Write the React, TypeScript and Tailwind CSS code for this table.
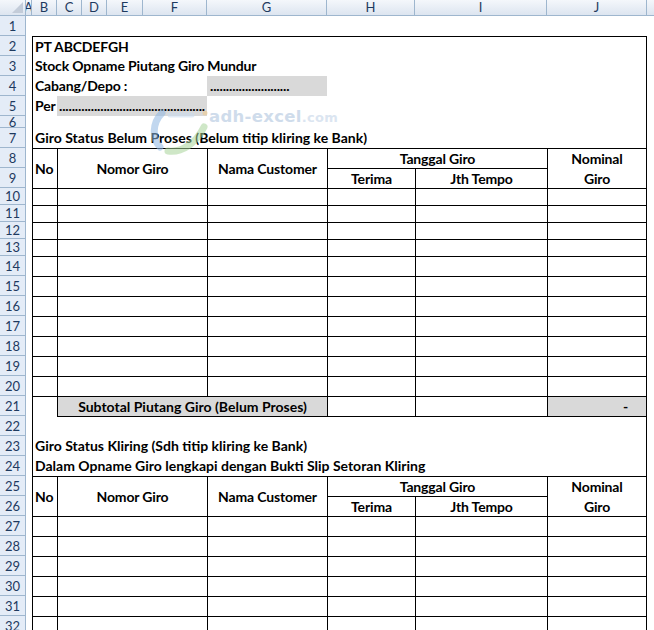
import React from "react";

// Excel-style sheet: Stock Opname Piutang Giro Mundur

const NUM =
  "flex w-[26px] shrink-0 items-center justify-center overflow-hidden border-r border-b border-[#9eb6ce] bg-[#e4ecf7] text-[13px] font-normal tracking-normal text-[#1e3a5f]";
const LINE = "border-black";
const GRAY = "bg-[#d9d9d9]";

function Num({ n }: { n: number }) {
  return <div className={NUM}>{n}</div>;
}

function Row({
  n,
  h = "h-[20px]",
  children,
}: {
  n: number;
  h?: string;
  children?: React.ReactNode;
}) {
  return (
    <div className={`flex ${h}`}>
      <Num n={n} />
      <div className="w-[6px] shrink-0" />
      {children}
    </div>
  );
}

// row inside the outer frame, text starting in column B
function FrameRow({
  n,
  top,
  children,
}: {
  n: number;
  top?: boolean;
  children?: React.ReactNode;
}) {
  return (
    <Row n={n} h={n === 6 ? "h-[12px]" : "h-[20px]"}>
      <div
        className={`flex w-[615px] shrink-0 whitespace-nowrap border-l border-r ${LINE} ${
          top ? "border-t" : ""
        }`}
      >
        {children}
      </div>
    </Row>
  );
}

function DataRow({ n, h = "h-[20px]" }: { n: number; h?: string }) {
  return (
    <Row n={n} h={h}>
      <div className={`w-[25px] shrink-0 border-l border-t ${LINE}`} />
      <div className={`w-[150px] shrink-0 border-l border-t ${LINE}`} />
      <div className={`w-[120px] shrink-0 border-l border-t ${LINE}`} />
      <div className={`w-[88px] shrink-0 border-l border-t ${LINE}`} />
      <div className={`w-[132px] shrink-0 border-l border-t ${LINE}`} />
      <div className={`w-[100px] shrink-0 border-l border-t border-r ${LINE}`} />
    </Row>
  );
}

function HeadBlock({ a }: { a: number }) {
  return (
    <div className="flex h-[40px]">
      <div className="flex w-[26px] shrink-0 flex-col">
        <div className={`${NUM} h-[20px]`}>{a}</div>
        <div className={`${NUM} h-[20px]`}>{a + 1}</div>
      </div>
      <div className="w-[6px] shrink-0" />
      <div className="grid shrink-0 grid-cols-[25px_150px_120px_88px_132px_100px] grid-rows-[20px_20px] text-center">
        <div className={`row-span-2 flex items-center border-l border-t pl-[2px] text-left ${LINE}`}>
          No
        </div>
        <div className={`row-span-2 flex items-center justify-center border-l border-t ${LINE}`}>
          Nomor Giro
        </div>
        <div className={`row-span-2 flex items-center justify-center border-l border-t ${LINE}`}>
          Nama Customer
        </div>
        <div className={`col-span-2 border-l border-t ${LINE}`}>Tanggal Giro</div>
        <div className={`row-span-2 flex flex-col border-l border-t border-r ${LINE}`}>
          <span>Nominal</span>
          <span>Giro</span>
        </div>
        <div className={`col-start-4 row-start-2 border-l border-t ${LINE}`}>Terima</div>
        <div className={`col-start-5 row-start-2 border-l border-t ${LINE}`}>Jth Tempo</div>
      </div>
    </div>
  );
}

const COLS: [string, string][] = [
  ["A", "w-[6px]"],
  ["B", "w-[25px]"],
  ["C", "w-[25px]"],
  ["D", "w-[25px]"],
  ["E", "w-[36px]"],
  ["F", "w-[64px]"],
  ["G", "w-[120px]"],
  ["H", "w-[88px]"],
  ["I", "w-[132px]"],
  ["J", "w-[100px]"],
  ["K", "w-[100px]"],
];

function ColHeader() {
  return (
    <div className="flex h-[16px] border-b border-[#9eb6ce] bg-linear-to-b from-[#f4f7fb] to-[#dde5f0] text-[13px] font-normal leading-[15px] tracking-normal text-[#1e3a5f]">
      <div className="relative w-[26px] shrink-0 border-r border-[#9eb6ce]">
        <svg className="absolute right-[2px] bottom-[2px]" width="11" height="11" viewBox="0 0 11 11">
          <polygon points="11,0 11,11 0,11" fill="#c3ccd9" />
        </svg>
      </div>
      {COLS.map(([c, w]) => (
        <div
          key={c}
          className={`${w} flex shrink-0 justify-center overflow-hidden border-r border-[#9eb6ce]`}
        >
          {c}
        </div>
      ))}
    </div>
  );
}

function Watermark() {
  return (
    <div className="pointer-events-none absolute left-[148px] top-[108px] flex opacity-55">
      <svg width="62" height="50" viewBox="0 0 62 50">
        <path
          d="M14 5 C4 15, 4 31, 12 39"
          stroke="#8fb8e3"
          strokeWidth="7"
          fill="none"
          strokeLinecap="round"
        />
        <path
          d="M20 43 C34 45, 48 35, 56 19"
          stroke="#a8d59a"
          strokeWidth="7"
          fill="none"
          strokeLinecap="round"
        />
        <path d="M22 7 L44 7" stroke="#c9dcef" strokeWidth="5" strokeLinecap="round" />
        <circle cx="57" cy="5" r="2.5" fill="#f2c98a" />
      </svg>
      <div className="-ml-[1px] mt-[-1px] font-[family-name:DejaVu_Sans,sans-serif] text-[16.5px] font-bold tracking-[0.3px] text-[#a9c1dc]">
        adh-excel<span className="text-[13px] text-[#bfd1e6]">.com</span>
      </div>
    </div>
  );
}

export default function App() {
  return (
    <div className="relative h-[630px] w-[654px] overflow-hidden bg-white font-[family-name:Lato,sans-serif] text-[14px] font-bold leading-[20px] tracking-[-0.15px] text-black">
      <ColHeader />
      <Row n={1} />
      <FrameRow n={2} top>
        <span className="pl-[2px]">PT ABCDEFGH</span>
      </FrameRow>
      <FrameRow n={3}>
        <span className="pl-[2px]">Stock Opname Piutang Giro Mundur</span>
      </FrameRow>
      <FrameRow n={4}>
        <div className="w-[174px] shrink-0 pl-[2px]">Cabang/Depo :</div>
        <div className={`w-[120px] shrink-0 pl-[3px] ${GRAY}`}>.........................</div>
      </FrameRow>
      <FrameRow n={5}>
        <div className="w-[24px] shrink-0 pl-[2px]">Per</div>
        <div className={`w-[150px] shrink-0 overflow-visible pl-[2px] ${GRAY}`}>
          ..............................................
        </div>
      </FrameRow>
      <FrameRow n={6} />
      <FrameRow n={7}>
        <span className="pl-[2px] tracking-normal">
          Giro Status Belum Proses (Belum titip kliring ke Bank)
        </span>
      </FrameRow>
      <HeadBlock a={8} />
      {[10, 11, 12, 13].map((n) => (
        <DataRow key={n} n={n} h="h-[17px]" />
      ))}
      {[14, 15, 16, 17, 18, 19, 20].map((n) => (
        <DataRow key={n} n={n} />
      ))}
      <Row n={21}>
        <div className={`w-[25px] shrink-0 border-l border-t ${LINE}`} />
        <div className={`w-[270px] shrink-0 border-l border-t text-center tracking-normal ${LINE} ${GRAY}`}>
          Subtotal Piutang Giro (Belum Proses)
        </div>
        <div className={`w-[88px] shrink-0 border-l border-t ${LINE}`} />
        <div className={`w-[132px] shrink-0 border-l border-t ${LINE}`} />
        <div className={`w-[100px] shrink-0 border-l border-t border-r pr-[18px] text-right ${LINE} ${GRAY}`}>
          -
        </div>
      </Row>
      <Row n={22}>
        <div className={`w-[25px] shrink-0 border-l ${LINE}`} />
        <div className={`w-[590px] shrink-0 border-t border-r ${LINE}`} />
      </Row>
      <FrameRow n={23}>
        <span className="pl-[2px] tracking-normal">Giro Status Kliring (Sdh titip kliring ke Bank)</span>
      </FrameRow>
      <FrameRow n={24}>
        <span className="pl-[2px] tracking-normal">
          Dalam Opname Giro lengkapi dengan Bukti Slip Setoran Kliring
        </span>
      </FrameRow>
      <HeadBlock a={25} />
      {[27, 28, 29, 30, 31, 32].map((n) => (
        <DataRow key={n} n={n} />
      ))}
      <Watermark />
    </div>
  );
}
